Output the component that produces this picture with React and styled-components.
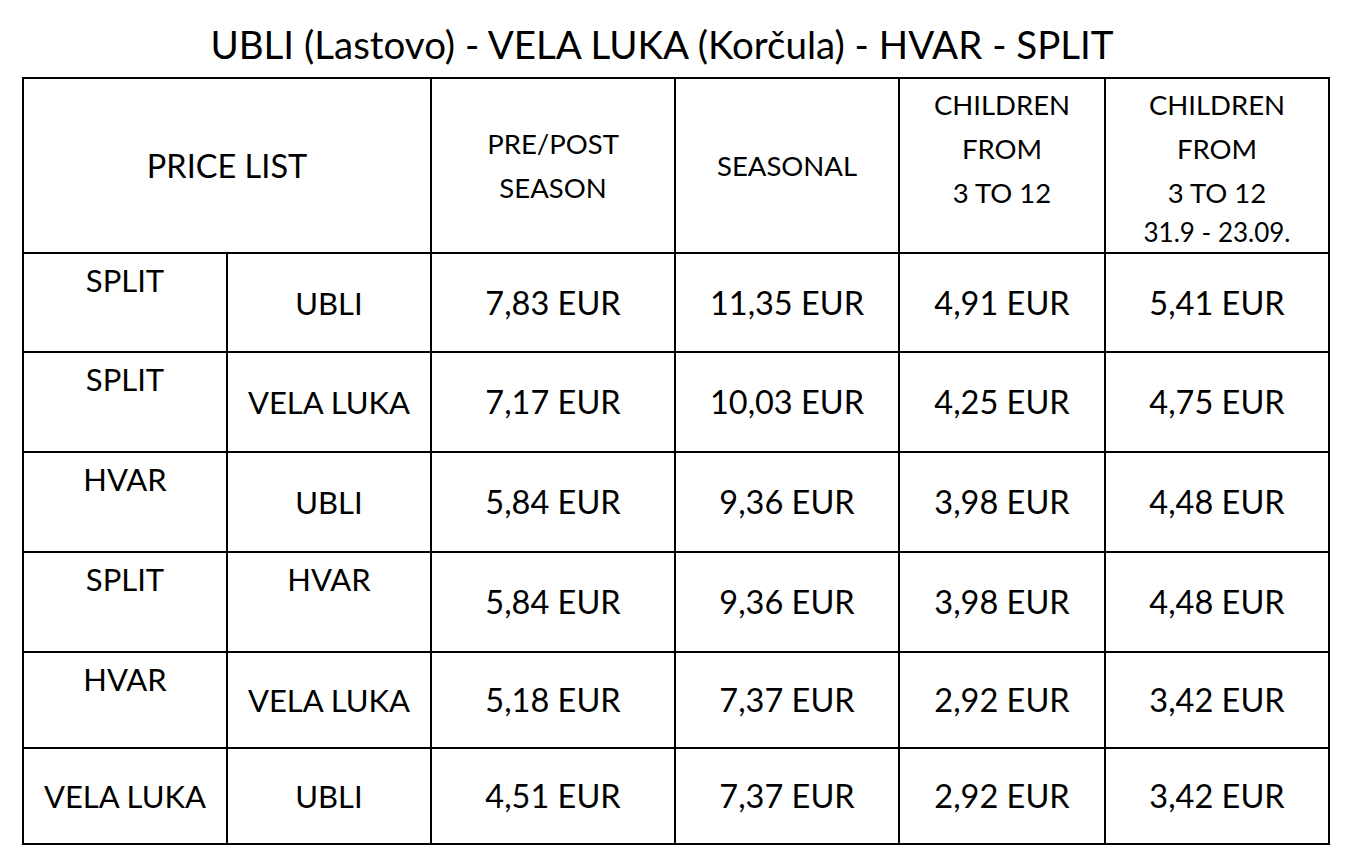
import React from 'react';
import styled, { createGlobalStyle } from 'styled-components';

const GlobalStyle = createGlobalStyle`
  body {
    margin: 0;
    background: #ffffff;
    color: #000000;
    font-family: Lato, 'Open Sans', sans-serif;
  }
`;

const Page = styled.div`
  width: 1350px;
  padding: 22px 0 0 22px;
  box-sizing: border-box;
`;

const Title = styled.h1`
  width: 1306px;
  margin: 0;
  padding-right: 26px;
  box-sizing: border-box;
  height: 55px;
  font-size: 38.5px;
  font-weight: 400;
  line-height: 44px;
  text-align: center;
  white-space: nowrap;
`;

const Table = styled.table`
  border-collapse: collapse;
  table-layout: fixed;
  width: 1306px;
`;

const Row = styled.tr`
  height: ${(p) => p.$height}px;
`;

const sizes = { head: '27.5px', place: '31px', price: '32.5px' };

const Cell = styled.td`
  border: 2px solid #000;
  padding: ${(p) => (p.$top ? '4px 4px 0' : '0 4px')};
  vertical-align: ${(p) => (p.$top ? 'top' : 'middle')};
  text-align: center;
  font-size: ${(p) => sizes[p.$kind || 'price']};
  line-height: 44px;
  white-space: nowrap;
`;

const Small = styled.div`
  font-size: 26px;
  line-height: 34px;
`;

const widths = [204, 204, 244, 224, 206, 224];

const rows = [
  { from: 'SPLIT', to: 'UBLI', prices: ['7,83', '11,35', '4,91', '5,41'], h: 99 },
  { from: 'SPLIT', to: 'VELA LUKA', prices: ['7,17', '10,03', '4,25', '4,75'], h: 100 },
  { from: 'HVAR', to: 'UBLI', prices: ['5,84', '9,36', '3,98', '4,48'], h: 100 },
  { from: 'SPLIT', to: 'HVAR', toTop: true, prices: ['5,84', '9,36', '3,98', '4,48'], h: 100 },
  { from: 'HVAR', to: 'VELA LUKA', prices: ['5,18', '7,37', '2,92', '3,42'], h: 96 },
  { from: 'VELA LUKA', fromMiddle: true, to: 'UBLI', prices: ['4,51', '7,37', '2,92', '3,42'], h: 96 },
];

export default function App() {
  return (
    <Page>
      <GlobalStyle />
      <Title>UBLI (Lastovo) - VELA LUKA (Korčula) - HVAR - SPLIT</Title>
      <Table>
        <colgroup>
          {widths.map((w, i) => (
            <col key={i} style={{ width: w }} />
          ))}
        </colgroup>
        <tbody>
          <Row $height={175}>
            <Cell colSpan={2}>PRICE LIST</Cell>
            <Cell $kind="head">
              PRE/POST
              <br />
              SEASON
            </Cell>
            <Cell $kind="head">SEASONAL</Cell>
            <Cell $kind="head" $top>
              CHILDREN
              <br />
              FROM
              <br />3 TO 12
            </Cell>
            <Cell $kind="head" $top>
              CHILDREN
              <br />
              FROM
              <br />3 TO 12
              <Small>31.9 - 23.09.</Small>
            </Cell>
          </Row>
          {rows.map((r, i) => (
            <Row key={i} $height={r.h}>
              <Cell $kind="place" $top={!r.fromMiddle}>
                {r.from}
              </Cell>
              <Cell $kind="place" $top={r.toTop}>
                {r.to}
              </Cell>
              {r.prices.map((p, j) => (
                <Cell key={j}>{p} EUR</Cell>
              ))}
            </Row>
          ))}
        </tbody>
      </Table>
    </Page>
  );
}
